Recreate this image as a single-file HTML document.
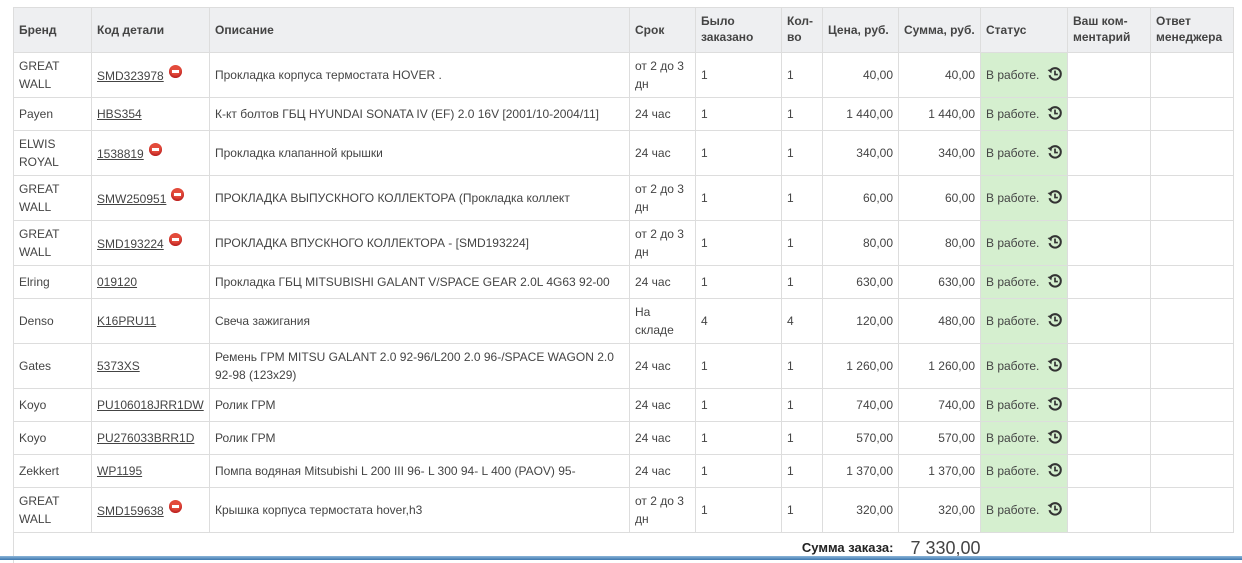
<!DOCTYPE html>
<html><head><meta charset="utf-8"><style>
html,body{margin:0;padding:0;background:#fff;width:1242px;height:560px;overflow:hidden}
body{font-family:"Liberation Sans",Arial,sans-serif;font-size:12px;color:#444}
table{position:absolute;left:13px;top:7px;border-collapse:collapse;table-layout:fixed;width:1220px}
td,th{border:1px solid #ddd;padding:0 5px;vertical-align:middle;line-height:18px;text-align:left;overflow:hidden;white-space:nowrap}
th{background:#eeeff1;font-weight:bold;color:#444;vertical-align:top;padding-top:5px;white-space:normal;line-height:16px}
th.c{vertical-align:middle;padding-top:0}
td.w{white-space:normal}
.r{text-align:right}
.st{background:#d5efcf}
a{color:#444;text-decoration:underline}
.m{display:inline-block;width:13px;height:13px;border-radius:50%;background:#e34b3b;vertical-align:2px;margin-left:5px;position:relative;box-shadow:inset 0 -2px 2px #b22}
.m:after{content:"";position:absolute;left:3px;top:5px;width:7px;height:3px;background:#fff}
.h{display:inline-block;vertical-align:-3px;margin-left:8px}
.tot td{border:none}
.bar{position:absolute;left:0;top:556px;width:1242px;height:4px;background:linear-gradient(#8ab4d8,#3f78b0)}
</style></head><body>
<svg width="0" height="0" style="position:absolute"><defs><symbol id="hi" viewBox="0 0 14 14"><path d="M3 4A5 5 0 1 1 2.2 8" fill="none" stroke="#333" stroke-width="1.8"/><path d="M0.5 3.5L4.5 2.5L3.8 6.5Z" fill="#333"/><path d="M7 4V7.5H9.5" fill="none" stroke="#333" stroke-width="1.5"/></symbol></defs></svg>
<table>
<colgroup><col style="width:78px"><col style="width:118px"><col style="width:420px"><col style="width:66px"><col style="width:86px"><col style="width:41px"><col style="width:76px"><col style="width:82px"><col style="width:87px"><col style="width:83px"><col style="width:83px"></colgroup>
<tr style="height:45px"><th class="c">Бренд</th><th class="c">Код детали</th><th class="c">Описание</th><th class="c">Срок</th><th>Было заказано</th><th>Кол-во</th><th class="c">Цена, руб.</th><th class="c">Сумма, руб.</th><th class="c">Статус</th><th>Ваш ком-ментарий</th><th>Ответ менеджера</th></tr>
<tr style="height:45px"><td class="w">GREAT WALL</td><td><a>SMD323978</a><span class="m"></span></td><td>Прокладка корпуса термостата HOVER .</td><td class="w">от 2 до 3 дн</td><td>1</td><td>1</td><td class="r">40,00</td><td class="r">40,00</td><td class="st">В работе.<svg class="h" width="16" height="16"><use href="#hi"/></svg></td><td></td><td></td></tr>
<tr style="height:33px"><td>Payen</td><td><a>HBS354</a></td><td>К-кт болтов ГБЦ HYUNDAI SONATA IV (EF) 2.0 16V [2001/10-2004/11]</td><td>24 час</td><td>1</td><td>1</td><td class="r">1 440,00</td><td class="r">1 440,00</td><td class="st">В работе.<svg class="h" width="16" height="16"><use href="#hi"/></svg></td><td></td><td></td></tr>
<tr style="height:45px"><td class="w">ELWIS ROYAL</td><td><a>1538819</a><span class="m"></span></td><td>Прокладка клапанной крышки</td><td>24 час</td><td>1</td><td>1</td><td class="r">340,00</td><td class="r">340,00</td><td class="st">В работе.<svg class="h" width="16" height="16"><use href="#hi"/></svg></td><td></td><td></td></tr>
<tr style="height:45px"><td class="w">GREAT WALL</td><td><a>SMW250951</a><span class="m"></span></td><td>ПРОКЛАДКА ВЫПУСКНОГО КОЛЛЕКТОРА (Прокладка коллект</td><td class="w">от 2 до 3 дн</td><td>1</td><td>1</td><td class="r">60,00</td><td class="r">60,00</td><td class="st">В работе.<svg class="h" width="16" height="16"><use href="#hi"/></svg></td><td></td><td></td></tr>
<tr style="height:45px"><td class="w">GREAT WALL</td><td><a>SMD193224</a><span class="m"></span></td><td>ПРОКЛАДКА ВПУСКНОГО КОЛЛЕКТОРА - [SMD193224]</td><td class="w">от 2 до 3 дн</td><td>1</td><td>1</td><td class="r">80,00</td><td class="r">80,00</td><td class="st">В работе.<svg class="h" width="16" height="16"><use href="#hi"/></svg></td><td></td><td></td></tr>
<tr style="height:33px"><td>Elring</td><td><a>019120</a></td><td>Прокладка ГБЦ MITSUBISHI GALANT V/SPACE GEAR 2.0L 4G63 92-00</td><td>24 час</td><td>1</td><td>1</td><td class="r">630,00</td><td class="r">630,00</td><td class="st">В работе.<svg class="h" width="16" height="16"><use href="#hi"/></svg></td><td></td><td></td></tr>
<tr style="height:45px"><td>Denso</td><td><a>K16PRU11</a></td><td>Свеча зажигания</td><td class="w">На складе</td><td>4</td><td>4</td><td class="r">120,00</td><td class="r">480,00</td><td class="st">В работе.<svg class="h" width="16" height="16"><use href="#hi"/></svg></td><td></td><td></td></tr>
<tr style="height:45px"><td>Gates</td><td><a>5373XS</a></td><td class="w">Ремень ГРМ MITSU GALANT 2.0 92-96/L200 2.0 96-/SPACE WAGON 2.0 92-98 (123x29)</td><td>24 час</td><td>1</td><td>1</td><td class="r">1 260,00</td><td class="r">1 260,00</td><td class="st">В работе.<svg class="h" width="16" height="16"><use href="#hi"/></svg></td><td></td><td></td></tr>
<tr style="height:33px"><td>Koyo</td><td><a>PU106018JRR1DW</a></td><td>Ролик ГРМ</td><td>24 час</td><td>1</td><td>1</td><td class="r">740,00</td><td class="r">740,00</td><td class="st">В работе.<svg class="h" width="16" height="16"><use href="#hi"/></svg></td><td></td><td></td></tr>
<tr style="height:33px"><td>Koyo</td><td><a>PU276033BRR1D</a></td><td>Ролик ГРМ</td><td>24 час</td><td>1</td><td>1</td><td class="r">570,00</td><td class="r">570,00</td><td class="st">В работе.<svg class="h" width="16" height="16"><use href="#hi"/></svg></td><td></td><td></td></tr>
<tr style="height:33px"><td>Zekkert</td><td><a>WP1195</a></td><td>Помпа водяная Mitsubishi L 200 III 96- L 300 94- L 400 (PAOV) 95-</td><td>24 час</td><td>1</td><td>1</td><td class="r">1 370,00</td><td class="r">1 370,00</td><td class="st">В работе.<svg class="h" width="16" height="16"><use href="#hi"/></svg></td><td></td><td></td></tr>
<tr style="height:45px"><td class="w">GREAT WALL</td><td><a>SMD159638</a><span class="m"></span></td><td>Крышка корпуса термостата hover,h3</td><td class="w">от 2 до 3 дн</td><td>1</td><td>1</td><td class="r">320,00</td><td class="r">320,00</td><td class="st">В работе.<svg class="h" width="16" height="16"><use href="#hi"/></svg></td><td></td><td></td></tr>
<tr class="tot" style="height:30px"><td colspan="7" class="r" style="border-left:1px solid #ddd;font-weight:bold;font-size:13px;color:#222">Сумма заказа:</td><td style="font-size:18px;color:#444;padding-left:12px">7&nbsp;330,00</td><td colspan="3"></td></tr>
</table>
<div class="bar"></div>
</body></html>
